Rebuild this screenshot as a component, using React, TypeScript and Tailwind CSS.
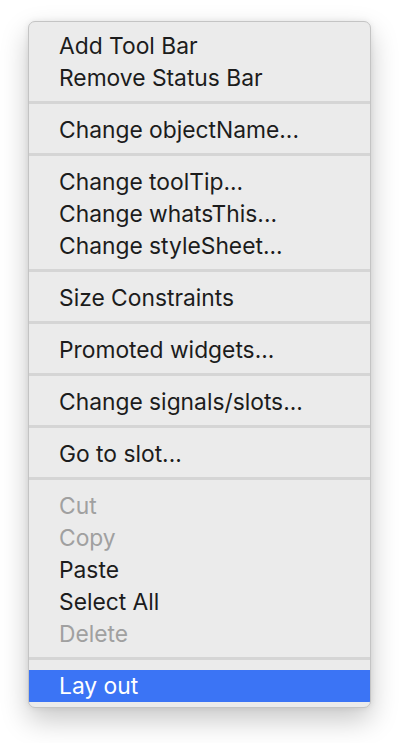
type Item = { label: string; disabled?: boolean; active?: boolean };

const groups: Item[][] = [
  [{ label: "Add Tool Bar" }, { label: "Remove Status Bar" }],
  [{ label: "Change objectName..." }],
  [
    { label: "Change toolTip..." },
    { label: "Change whatsThis..." },
    { label: "Change styleSheet..." },
  ],
  [{ label: "Size Constraints" }],
  [{ label: "Promoted widgets..." }],
  [{ label: "Change signals/slots..." }],
  [{ label: "Go to slot..." }],
  [
    { label: "Cut", disabled: true },
    { label: "Copy", disabled: true },
    { label: "Paste" },
    { label: "Select All" },
    { label: "Delete", disabled: true },
  ],
  [{ label: "Lay out", active: true }],
];

function MenuItem({ item }: { item: Item }) {
  const color = item.active
    ? "bg-[#3b74f5] text-white"
    : item.disabled
      ? "text-[#a0a0a0]"
      : "text-[#1c1c1c]";
  return (
    <div className={`h-8 pl-[30px] flex items-center text-[22.8px] leading-none ${color}`}>
      {item.label}
    </div>
  );
}

export default function App() {
  return (
    <div className="min-h-[743px] bg-white pt-[21px] pl-[28px]">
      <div
        className="w-[343px] bg-[#ebebeb] border border-[#c4c4c4] rounded-[7px] pt-[8px] pb-[5px] shadow-[0_12px_28px_rgba(0,0,0,0.22),0_0_6px_rgba(0,0,0,0.08)] overflow-hidden"
        style={{ fontFamily: '"Inter", "Liberation Sans", sans-serif' }}
      >
        {groups.map((group, gi) => (
          <div key={gi}>
            {gi > 0 && (
              <div className="pt-[7px] pb-[10px]">
                <div className="h-[3px] bg-[#d5d5d5]" />
              </div>
            )}
            {group.map((item) => (
              <MenuItem key={item.label} item={item} />
            ))}
          </div>
        ))}
      </div>
    </div>
  );
}
